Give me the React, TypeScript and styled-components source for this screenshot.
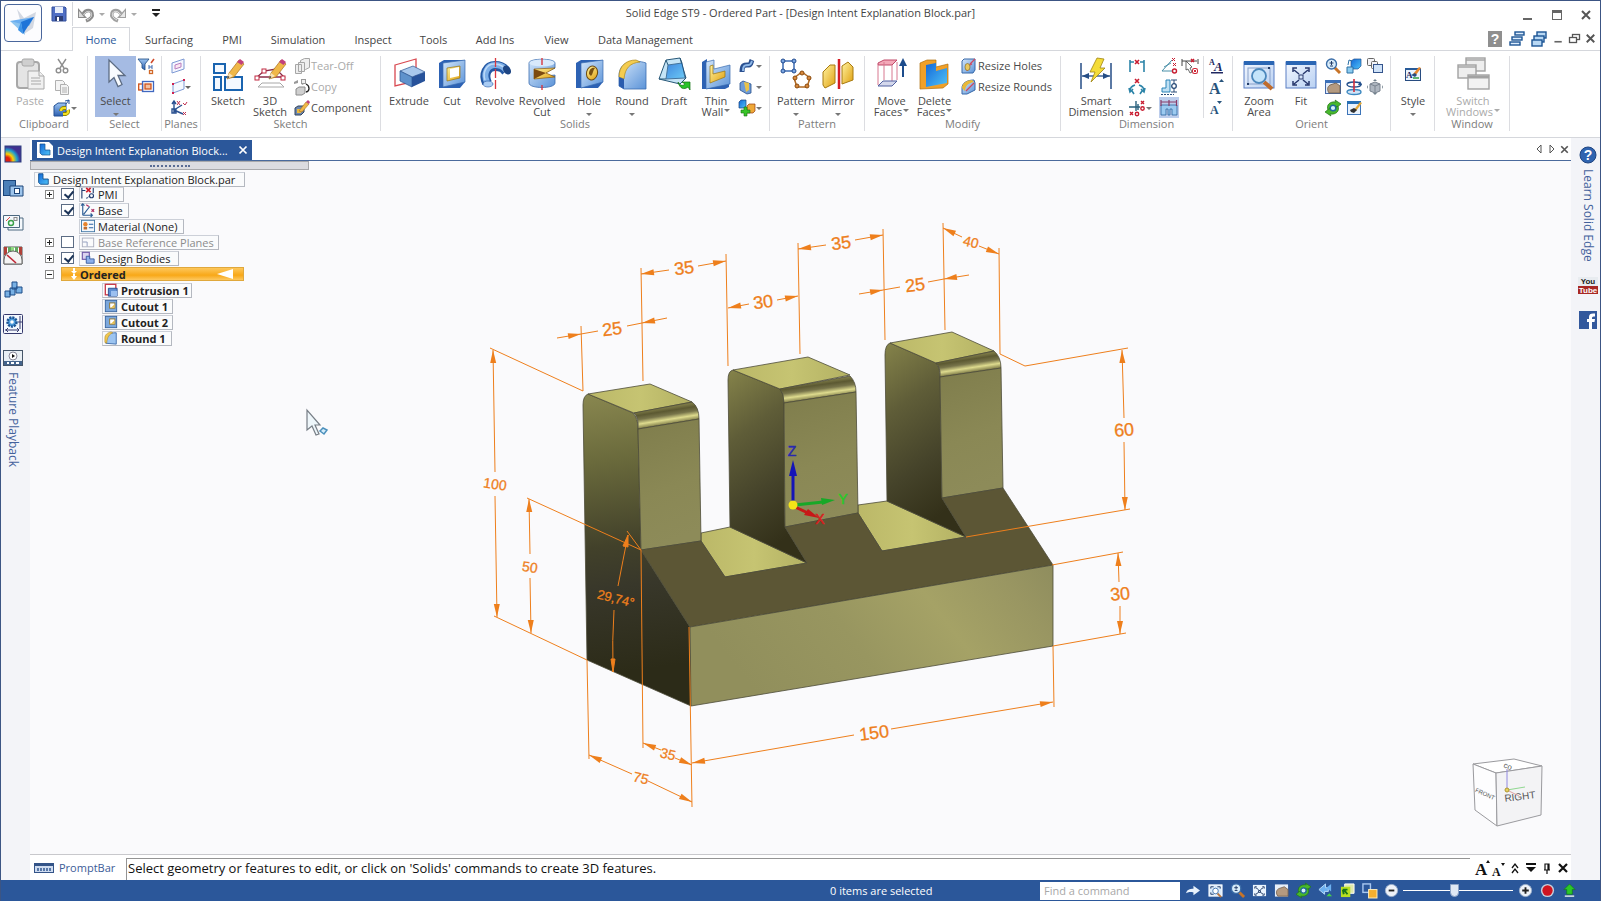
import React from "react";
import styled, { createGlobalStyle, css } from "styled-components";

const UI_FONT = '"Open Sans", "Noto Sans", sans-serif';
const BLUE = "#2b579a";
const LINE = "#d5d7dc";
const ORANGE = "#ee7f1c";

const GlobalStyle = createGlobalStyle`
  * { box-sizing: border-box; }
  body { margin: 0; font-family: ${UI_FONT}; font-size: 11px; color: #444; background: #fff; }
  button, input { font-family: inherit; font-size: inherit; color: inherit; }
  button { border: 0; padding: 0; background: none; cursor: default; }
  svg { display: block; flex: none; }
`;

/* ---------- icon drawings ---------- */

const DefsSvg = styled.svg`position: absolute; width: 0; height: 0;`;

const Defs = () => (
  <DefsSvg aria-hidden="true">
    <defs>
      <linearGradient id="blu" x1="0" y1="0" x2="1" y2="1"><stop offset="0" stopColor="#d3e6fa" /><stop offset="1" stopColor="#5b93d8" /></linearGradient>
      <linearGradient id="blu2" x1="0" y1="0" x2="0" y2="1"><stop offset="0" stopColor="#9cc4f2" /><stop offset="1" stopColor="#2c5fb0" /></linearGradient>
      <linearGradient id="yel" x1="0" y1="0" x2="1" y2="1"><stop offset="0" stopColor="#fff3a0" /><stop offset="1" stopColor="#e0a010" /></linearGradient>
      <linearGradient id="pane" x1="0" y1="0" x2="1" y2="1"><stop offset="0" stopColor="#f4f8ff" /><stop offset="1" stopColor="#b8d0f2" /></linearGradient>
      <linearGradient id="sky" x1="0" y1="0" x2="1" y2="1"><stop offset="0" stopColor="#1468d8" /><stop offset="1" stopColor="#4fc3f7" /></linearGradient>
      <radialGradient id="heat" cx="0.1" cy="0.9" r="1"><stop offset="0.2" stopColor="#e02010" /><stop offset="0.4" stopColor="#ffd000" /><stop offset="0.65" stopColor="#20a0d0" /><stop offset="0.85" stopColor="#403090" /></radialGradient>
    </defs>
  </DefsSvg>
);

const pencil = (
  <g><path d="M15 21l2-6 10-13 5 4-10 13z" fill="#f0b848" stroke="#a87020" strokeWidth=".7" /><path d="M15 21l2-6 4 3z" fill="#f7e2b8" /><path d="M15 21l1-3 1.500 1z" fill="#333" /><path d="M25 4l3-3 4 3-2.500 3z" fill="#c2417c" /></g>
);
const monitor = <g><rect x="1" y="4" width="30" height="26" fill="url(#pane)" stroke="#5a7fc4" /><rect x="1" y="3" width="30" height="4" fill="#2a66b4" /></g>;
const gripHand = <path d="M4 14c-2-3-2-6 1-8l6-2 4 3v7z" fill="#b49a80" stroke="#6d5a48" strokeWidth=".8" />;
const magnifier = <g><path d="M9 9l6 6" stroke="#c87428" strokeWidth="3" /><circle cx="6.500" cy="6" r="5" fill="#d8ecfa" stroke="#3c6ea8" strokeWidth="1.400" /></g>;

const art: Record<string, React.ReactNode> = {
  logo: <g><path d="M8 0l7 9 12-6-3 16-9 6z" fill="#d3d8e2" /><path d="M1 12h13l2 14z" fill="#8cc4f0" /><path d="M1 12l24-4-5 9z" fill="#6aaef0" /><path d="M12 13l13-5-11 17z" fill="#1f74d8" /><path d="M12 13l-3 8 5 4z" fill="#3a92e8" /></g>,
  save: <g><path d="M1 1h13l1 1v13H1z" fill="#4f6ec4" stroke="#34509c" /><rect x="4" y="1" width="8" height="6" fill="#e8eefa" /><rect x="4" y="10" width="8" height="5" fill="#2d3f78" /><rect x="6" y="11" width="2" height="4" fill="#fff" /></g>,
  undo: <g><path d="M8 15c5-2 7-5 6-8s-6-4-9 1" fill="none" stroke="#8c8c8c" strokeWidth="3.400" /><path d="M0 2v10h9z" fill="#8c8c8c" /><path d="M9 14c4-2 5-4 4.500-6.500s-5-3.500-8 1" fill="none" stroke="#dcdcdc" /><path d="M1 5v6h5z" fill="#dcdcdc" /></g>,
  redo: <g transform="translate(16 0) scale(-1 1)"><path d="M8 15c5-2 7-5 6-8s-6-4-9 1" fill="none" stroke="#a0a0a0" strokeWidth="3.400" /><path d="M0 2v10h9z" fill="#a0a0a0" /><path d="M9 14c4-2 5-4 4.500-6.500s-5-3.500-8 1" fill="none" stroke="#e8e8e8" /><path d="M1 5v6h5z" fill="#e8e8e8" /></g>,
  customise: <g fill="#222"><rect x="4" y="3" width="8" height="2" /><path d="M4 7h8l-4 4z" /></g>,
  paste: <g stroke="#a8a8a8" fill="#f0f0f0"><rect x="3" y="4" width="22" height="26" rx="3" fill="#e4e4e4" strokeWidth="2" /><rect x="8" y="1" width="12" height="7" rx="2" fill="#cfcfcf" /><path d="M14 13h11l5 5v13H14z" /><path d="M17 20h9M17 23h10M17 26h10M25 13v5h5" /></g>,
  scissors: <g stroke="#8e8e8e" strokeWidth="1.400" fill="none"><path d="M4 1l6 9M12 1l-6 9" /><circle cx="4.500" cy="12.500" r="2.300" /><circle cx="11.500" cy="12.500" r="2.300" /></g>,
  pages: <g stroke="#b0b0b0" fill="#f4f4f4"><path d="M1.500 1.500h7l2 2v8h-9z" /><path d="M6.500 5.500h6l2 2v8h-8z" /><path d="M8 9h5M8 11h5M8 13h5" /></g>,
  partClip: <g><path d="M0 6l4-3h8v10l-3 3H0z" fill="url(#blu2)" stroke="#245094" /><path d="M12 4l3-4M11 1l4-1 0 4" stroke="#2a57a0" fill="none" /><path d="M7 11a3 3 0 013-3h2M9 14h3a3 3 0 002-4" stroke="#8f8200" strokeWidth="3.800" fill="none" /><path d="M7 11a3 3 0 013-3h2M9 14h3a3 3 0 002-4" stroke="#f4e020" strokeWidth="2.200" fill="none" /></g>,
  cursor: <path d="M9 2v22l5-4.500 4 9 4-2-4-9h7z" fill="#f8fbff" stroke="#5c6c84" strokeWidth="1.300" />,
  filter: <g><path d="M0 1h11L7 6v6l-3-2V6z" fill="url(#blu2)" stroke="#1c4a80" strokeWidth=".8" /><path d="M13 5l3-4" stroke="#d04828" strokeWidth="1.500" /><path d="M11 7v4M14 7v4M11 9h3" stroke="#3c68b0" /><rect x="11.500" y="12.500" width="3" height="3" fill="none" stroke="#d06828" strokeWidth="1.300" /></g>,
  selectBox: <g fill="none" strokeWidth="1.300"><rect x=".7" y="5" width="4" height="6" stroke="#d05018" /><rect x="4.500" y="2.500" width="11" height="10" stroke="#4068c0" /><rect x="7" y="5" width="6" height="5" fill="#f4c0a0" stroke="#d05018" /></g>,
  planeA: <g><path d="M1 5l12-4v10L1 15z" fill="#f5f6ff" stroke="#7e9ad4" /><path d="M4 7l6-2v4l-6 2z" fill="#fbe6f0" stroke="#b87fc0" /></g>,
  planeB: <g><path d="M2 5l11-4v9L2 14z" fill="#f5f9ff" stroke="#7e9ad4" /><g fill="#d02050"><rect x="12" y="0" width="2" height="2" /><rect x="1" y="13" width="2" height="2" /><rect x="1" y="4" width="2" height="2" /></g><path d="M14 7h6l-3 3z" fill="#666" /></g>,
  axes: <g stroke="#2a5090" strokeWidth="1.400" fill="none"><path d="M3 13V2M1 4l2-3 2 3M3 10l9 4M3 10l8-5M1 9h4v4H1z" /><path d="M6 1l3 4M9 1L6 5" stroke="#c03050" strokeWidth="1" /><path d="M12 12l3 3M15 12l-3 3M12 3l2 2 2-3" stroke="#c03050" strokeWidth="1" /></g>,
  sketch: <g fill="#f4f9ff" stroke="#1a64b0" strokeWidth="2"><rect x="2" y="6" width="11" height="9" /><rect x="2" y="19" width="7" height="13" /><rect x="13" y="19" width="17" height="13" /><g stroke="none">{pencil}</g></g>,
  sketch3: <g><path d="M2 20l8-7 12-2 8 8H2z" fill="none" stroke="#8a2c48" strokeWidth="1.300" /><g fill="#fff" stroke="#c02840"><rect x="1" y="18" width="4" height="4" /><rect x="8" y="11" width="4" height="4" /><rect x="27" y="18" width="4" height="4" /></g><path d="M8 25h18l4 4H4z" fill="#fff" stroke="#a8a8a8" />{pencil}</g>,
  tear: <g fill="#eee" stroke="#a6a6a6"><path d="M6.500 2.500l4-2h5v9l-4 2h-5z" /><path d="M4.500 4.500h6v9h-6zM1.500 6.500h6v9h-6z" /></g>,
  copyIc: <g><path d="M0 3l4-2v3l-4 1zM7 3l4-2 1 3-4 2z" fill="#999" /><rect x="7.500" y=".5" width="4" height="4" fill="#eee" stroke="#999" /><path d="M2 10l3-2h6v6l-3 2H2z" fill="#cfcfcf" stroke="#8a8a8a" /><path d="M12 5c4 2 4 7 0 8" fill="none" stroke="#222" strokeWidth="1.300" /></g>,
  component: <g><path d="M1 8l3-2h6v6l-3 3H1z" fill="#6c86ac" stroke="#33445e" /><rect x="3" y="9" width="4" height="4" fill="#e8b840" /><path d="M5 11L12 2l3 2-7 8z" fill="#f0b848" stroke="#a87020" strokeWidth=".6" /><path d="M12 2l2-2 2 2-1 2z" fill="#c2417c" /></g>,
  extrude: <g><path d="M2 7l21-6v22L2 28z" fill="#fff" stroke="#d84850" strokeWidth="1.300" /><path d="M7 13l13-5 12 6-13 5z" fill="#a9c8ec" stroke="#2c5490" strokeWidth=".7" /><path d="M7 13l12 6v10L7 23z" fill="#5f92cc" stroke="#2c5490" strokeWidth=".7" /><path d="M19 19l13-5v9l-13 6z" fill="#27529a" /></g>,
  cut: <g><path d="M3 5l5-3h21v22l-5 6H3z" fill="#2d62b4" /><path d="M7 5l22-3v22L7 29z" fill="url(#blu)" stroke="#3a6cb0" strokeWidth=".7" /><path d="M11 10l13-2v12l-13 3z" fill="url(#yel)" stroke="#9a7410" strokeWidth=".7" /><path d="M14 11l9-2v9l-9 2z" fill="#fff" /></g>,
  revolve: <g><path d="M8 25C4 16 8 8 16 8s9 3 11 5" fill="none" stroke="#2458a4" strokeWidth="10" /><path d="M8 24C4 16 8 7 16 7s9 3 11 5" fill="none" stroke="#7fb0e8" strokeWidth="6" /><path d="M6 22C3 14 8 6 15 6s8 2 11 4" fill="none" stroke="#bcd9f8" strokeWidth="1.500" /><ellipse cx="28" cy="12" rx="3.500" ry="5" fill="#1e4684" transform="rotate(-35 28 12)" /><ellipse cx="9" cy="26" rx="5" ry="3" fill="#a9ccf4" stroke="#2458a4" strokeWidth=".6" /><path d="M16.500 0v32" stroke="#d83840" strokeWidth="1.300" strokeDasharray="9 2" /></g>,
  revolvedCut: <g><path d="M3 5c0-5 26-5 26 0v5l-9 4v4l9-1v8c0 6-26 6-26 0z" fill="url(#blu)" stroke="#3a6cb0" strokeWidth=".8" /><path d="M8 11l21-1-9 5 9 4-21 2z" fill="url(#yel)" stroke="#8a5a10" strokeWidth=".7" /><path d="M8 11l12 4-12 6z" fill="#7c4a10" /><ellipse cx="16" cy="5" rx="12.500" ry="3.500" fill="#d8e9fb" /><path d="M16 0v7M16 27v5" stroke="#d83840" strokeWidth="1.400" /></g>,
  hole: <g><path d="M3 5l5-3h22v22l-5 6H3z" fill="#2d62b4" /><path d="M8 5l22-3v22L8 30z" fill="url(#blu)" stroke="#3a6cb0" strokeWidth=".7" /><ellipse cx="19" cy="15" rx="5.500" ry="7" fill="url(#yel)" stroke="#6b4a10" transform="rotate(15 19 15)" /><path d="M16 16c0-5 3-7 6-6-2 2-2 6-4 8z" fill="#7b5210" /></g>,
  round: <g><path d="M3 18v10l5 3h22V5c-12-4-27-2-27 13z" fill="url(#blu)" stroke="#3a6cb0" strokeWidth=".8" /><path d="M3 19C3 8 10 2 20 2l4 2C14 5 9 10 8 21z" fill="#f4cc50" stroke="#b08818" strokeWidth=".7" /><path d="M3 19l5 2v10l-5-3z" fill="#2a5cae" /></g>,
  draft: <g><path d="M8 2l14-2 6 20-6 6-21-5z" fill="#c5e4f6" stroke="#285878" /><path d="M10 7l14-2 3 15-19 1z" fill="url(#sky)" opacity=".75" stroke="#1b4f80" /><path d="M8 2l2 5M22 0l2 5M27 20l1 0M8 21l-7 0" stroke="#285878" /><path d="M20 24c2 4 5 4 7 2l-3-2 8 0v8l-2-3c-4 3-8 2-10-5z" fill="#28c428" stroke="#107010" strokeWidth=".7" /></g>,
  thin: <g><path d="M2 4l5-3v25h22v3l-4 2H2z" fill="#2d62b4" /><path d="M6 4l8-2v9l16-4v19L6 31z" fill="url(#blu)" stroke="#3a6cb0" strokeWidth=".7" /><path d="M10 8l3-1v9l12-3v6l-15 6z" fill="url(#yel)" stroke="#9a7410" strokeWidth=".7" /></g>,
  sweep: <g><path d="M3 14c0-8 3-7 7-7 2 0 2-3 3-5" fill="none" stroke="#2a5090" strokeWidth="5" /><path d="M4 13c0-6 2-6 6-6 2 0 2-2 3-4" fill="none" stroke="#8fb8e8" strokeWidth="2" /></g>,
  rib: <g><path d="M1 4l3-2 8 3v9l-4 1-7-4z" fill="#6f9cd8" stroke="#28508c" strokeWidth=".8" /><path d="M5 3l5 1v7l-3 2z" fill="#e9c34c" /></g>,
  addBody: <g><path d="M0 2l2-2h5v6l-2 2H0z" fill="url(#sky)" stroke="#18407c" strokeWidth=".7" /><path d="M8 6l2-2h6v7l-2 2H8z" fill="#eea838" stroke="#9a3c10" strokeWidth=".7" /><path d="M5 7h3v3h3v3H8v3H5v-3H2v-3h3z" fill="#38c428" stroke="#147010" strokeWidth=".6" /></g>,
  pattern: <g fill="none"><rect x="3" y="3" width="11" height="10" stroke="#3c6cb4" strokeWidth="1.500" /><g fill="#78a4e0" stroke="#244c90"><circle cx="3" cy="3" r="2" /><circle cx="14" cy="3" r="2" /><circle cx="3" cy="13" r="2" /><circle cx="14" cy="13" r="2" /></g><path d="M22 14l8 6-3 9H17l-3-9z" stroke="#b06820" strokeWidth="1.500" /><g fill="#d8883c" stroke="#8a4c10"><circle cx="22" cy="15" r="2" /><circle cx="29" cy="20" r="2" /><circle cx="27" cy="28" r="2" /><circle cx="17" cy="28" r="2" /><circle cx="15" cy="20" r="2" /></g></g>,
  mirror: <g><path d="M1 14L8 7h5v18l-10 5-2-3z" fill="url(#yel)" stroke="#a87a10" /><path d="M20 8l6-4 5 5v13l-11 4z" fill="url(#yel)" stroke="#a87a10" /><path d="M17 1v30" stroke="#d41c24" strokeWidth="2.500" /></g>,
  moveFaces: <g fill="none"><path d="M2 5l6-3h13l-5 5H2z" fill="#f4a8b8" stroke="#c04868" /><path d="M2 7v20M16 7v20M21 4v18M8 4v18" stroke="#d87890" /><path d="M2 28l5-5h14l-5 5z" fill="#d4d8ec" stroke="#5060a0" /><path d="M27 19V4" stroke="#1c4c8c" strokeWidth="2" /><path d="M27 0l4 8h-8z" fill="#1c4c8c" /></g>,
  deleteFaces: <g><path d="M1 5l7-3h9v7l12-3v20l-5 4-23 1z" fill="#f0a028" stroke="#b07010" strokeWidth=".7" /><path d="M7 7l10-2v8l11-3v15L7 29z" fill="url(#sky)" /></g>,
  resizeH: <g><path d="M1 3l2-2h11v11l-2 3H1z" fill="url(#blu)" stroke="#3868a8" /><path d="M9 6l5-5M6 13c0-4 2-6 5-7" stroke="#d04860" strokeWidth="1.300" fill="none" /><ellipse cx="6.500" cy="9" rx="2.500" ry="3.500" fill="#e8c860" stroke="#806010" strokeWidth=".6" /></g>,
  resizeR: <g><path d="M1 9c0-5 5-8 12-8l1 3v7l-8 4H1z" fill="url(#blu)" stroke="#3868a8" /><path d="M1 9c0-5 5-8 10-8l2 2C7 4 4 7 4 12z" fill="#e8b838" /><path d="M5 12l8-8" stroke="#d04860" strokeWidth="1.300" /></g>,
  smart: <g><path d="M1 5v26M31 5v26" stroke="#264e86" strokeWidth="1.500" /><path d="M2 18h28" stroke="#264e86" strokeWidth="1.300" /><path d="M2 18l7-3v6zM30 18l-7-3v6z" fill="#264e86" /><path d="M17 0l7 1-4 9h5L11 24l4-10h-5z" fill="#f4dc38" stroke="#a08410" strokeWidth=".8" /></g>,
  d1: <g stroke="#2c84a8" strokeWidth="1.600" fill="none"><path d="M1 2v12M15 2v12M1 4h4M11 4h4" /><path d="M6 2l4 4M10 2L6 6" stroke="#c81c30" /></g>,
  d2: <g stroke="#2c84a8" strokeWidth="1.600" fill="none"><path d="M6 6c-3 1-5 3-5 6M10 6c3 1 5 3 5 6M0 9l1 4 3-3M16 9l-1 4-3-3M5 15l-2-3M11 15l2-3" /><path d="M6 0l4 4M10 0L6 4" stroke="#c81c30" /></g>,
  d3: <g stroke="#28607c" strokeWidth="1.400" fill="none"><path d="M0 7h11M7 1v10M9 4v6" /><path d="M12 1l3 3M15 1l-3 3M1 12l3 3M4 12l-3 3" stroke="#c81c30" /><circle cx="13.500" cy="8.500" r="1.700" stroke="#c81c30" /><circle cx="8" cy="14" r="1.700" stroke="#c81c30" /></g>,
  d4: <g fill="none"><path d="M1 13L11 2M1 13h10M3 9l7-4" stroke="#4a90a8" /><path d="M11 0l3 3M14 0l-3 3M12 5l3 3M15 5l-3 3" stroke="#c81c30" /><circle cx="13.500" cy="13" r="2" stroke="#c81c30" strokeWidth="1.400" /></g>,
  d5: <g fill="none"><path d="M1 13V9h4V1h4v12z" fill="#bfe0f4" stroke="#2c84b8" /><path d="M10 1h6M13 1v12M10 13h6" stroke="#2a4c78" /><circle cx="13" cy="7" r="2.300" fill="#fff" stroke="#2a4c78" strokeWidth="1.300" /><path d="M0 15.500h13" stroke="#2a4c78" strokeDasharray="2 1" /></g>,
  d6: <g><rect x="-2" y="-3" width="20" height="21" fill="#bccdec" /><path d="M0 5h16v10h-5V9H9v6H7V9H5v6H0z" fill="#9ccaf0" stroke="#2c64a0" strokeWidth=".8" /><path d="M0 0v6M8 0v6M15.500 0v6M0 2h15" stroke="#883c68" fill="none" strokeWidth="1.200" /></g>,
  d7: <g fill="none"><path d="M0 1v7M16 1v5M0 3h15" stroke="#444" /><path d="M9 1l3 3M12 1L9 4" stroke="#c81c30" strokeWidth="1.500" /><path d="M4 3l6 6-2 1 2 4-2 1-2-4-2 1z" fill="#fff" stroke="#444" strokeWidth=".8" /><rect x="10.500" y="10.500" width="5" height="5" rx="1" fill="#fff" stroke="#d02838" /><path d="M11.500 11.500l3 3M14.500 11.500l-3 3" stroke="#d02838" /></g>,
  aStyle: <g fill="#202860" fontFamily="Liberation Serif" fontWeight="bold"><text x="0" y="7" fontSize="8">A</text><text x="5" y="13" fontSize="13" fontStyle="italic">A</text><path d="M2 14h12v1.500H2z" /></g>,
  aUp: <g fill="#28547c"><text x="0" y="15" fontSize="16" fontFamily="Liberation Serif" fontWeight="bold">A</text><path d="M10 3l2.500-3L15 3z" /></g>,
  aDown: <g fill="#28547c"><text x="1" y="14" fontSize="12" fontFamily="Liberation Serif" fontWeight="bold">A</text><path d="M8 1h5l-2.500 3z" /></g>,
  zoomArea: <g>{monitor}<rect x="5" y="10" width="22" height="16" fill="none" stroke="#88a0c8" /><path d="M25 9h2v2h-2zM4 25h2v2H4z" fill="#223c68" /><path d="M21 24l8 7" stroke="#c06c2c" strokeWidth="4" /><circle cx="16" cy="18" r="7" fill="#c4e4fa" stroke="#4c88bc" strokeWidth="1.800" /></g>,
  fit: <g>{monitor}<g stroke="#28386c" strokeWidth="1.500" fill="none"><path d="M9 12l5 4M23 12l-5 4M9 26l5-4M23 26l-5-4M8 14v-4h4M20 10h4v4M8 23v4h4M20 27h4v-4" /><rect x="14" y="17" width="4" height="4" strokeWidth="1" /></g></g>,
  zoom: <g>{magnifier}<path d="M4.500 5h4M6.500 3v4M5 8h3" stroke="#223c68" /></g>,
  hand: <g><rect x=".5" y="1.500" width="15" height="13" fill="#dfe9f8" stroke="#4468a8" /><rect x="0" y="1" width="16" height="3" fill="#3c70b8" />{gripHand}</g>,
  spin: <g><path d="M3 10C1 5 5 1 11 2l-1-2 6 4-5 4V6C8 5 5 6 5 9z" fill="#48b82c" stroke="#1f7414" strokeWidth=".7" /><path d="M13 6c2 5-2 9-8 8l1 2-6-4 5-4v2c3 1 6 0 6-3z" fill="#48b82c" stroke="#1f7414" strokeWidth=".7" /><circle cx="8" cy="8" r="2.800" fill="#d6f0fa" stroke="#206a9c" strokeWidth="1.400" /></g>,
  rotate: <g><path d="M5 3l3-2h7v7l-3 3H5z" fill="url(#sky)" stroke="#24508c" strokeWidth=".7" /><path d="M1 9h6v6H1z" fill="#8cccf0" stroke="#2c70a4" /><path d="M2 7l1-5 3 1" fill="none" stroke="#2c70a4" /></g>,
  turn: <g fill="none" strokeWidth="1.400"><ellipse cx="8" cy="5.500" rx="7" ry="2.500" stroke="#24508c" /><ellipse cx="8" cy="13" rx="7" ry="2.500" fill="#cfe4f8" stroke="#3c88c0" /><path d="M8 0v13" stroke="#d02c3c" strokeWidth="1.600" /><path d="M12 6l4 0-2-4z" fill="#24508c" /></g>,
  preview: <g><rect x="1.500" y="1.500" width="13" height="13" fill="#eaf3fd" stroke="#3c74b8" /><rect x="1" y="1" width="14" height="3" fill="#2870b4" /><path d="M7 11l7-9 2 1-6 8z" fill="#e4a838" /><path d="M4 10l4-2 3 2-3 3-3-1z" fill="#303030" /></g>,
  views: <g fill="#f4f4f8" stroke="#666"><rect x=".5" y=".5" width="7" height="7" rx="1" /><rect x="4.500" y="3.500" width="6" height="7" rx="1" /><rect x="6.500" y="6.500" width="9" height="8" fill="#cfe2f8" stroke="#34548c" /></g>,
  cube: <g><path d="M3 5l5-2 5 2v7l-5 2-5-2z" fill="#aeb6c0" stroke="#7a8490" /><path d="M3 5l5 2 5-2M8 7v7" stroke="#7a8490" fill="none" /><path d="M6 2l2-2 2 2zM6 14l2 2 2-2zM1 6l-1 2 1 2zM15 6l1 2-1 2z" fill="#70808c" /></g>,
  style: <g><rect x=".5" y="2.500" width="15" height="12" fill="#eaf3fd" stroke="#284c80" /><rect x="0" y="2" width="16" height="2" fill="#285a98" /><text x="1" y="12" fontSize="9" fontFamily="Liberation Serif" fontWeight="bold" fill="#202860">A</text><path d="M8 8l6-7 2 1-5 7z" fill="#e8882c" /><path d="M6 9l4-2 2 2-2 2z" fill="#284c80" /><path d="M8 12h6" stroke="#30a040" strokeWidth="1.500" /></g>,
  windows: <g fill="#eee" stroke="#a2a2a2" strokeWidth="1.400"><rect x="9" y="0" width="19" height="13" /><path d="M9 2h19" /><rect x="1" y="7" width="18" height="13" /><path d="M1 9h18" /><rect x="11" y="17" width="21" height="14" fill="#f2f2f2" /><path d="M11 19h21" strokeWidth="3" /></g>,
  help: <g><rect x="1" y="0" width="14" height="16" fill="#8f8f8f" /><text x="8" y="13" textAnchor="middle" fontSize="14" fontWeight="bold" fill="#fff" fontFamily="Liberation Sans">?</text></g>,
  cascade: <g fill="#dcecfc" stroke="#1c5494" strokeWidth="1.400"><rect x="6" y="1" width="9" height="3" /><rect x="3" y="6" width="10" height="3" /><rect x="1" y="11" width="10" height="3" /></g>,
  cascade2: <g fill="#b8d8f4" stroke="#1c5494" strokeWidth="1.400"><rect x="6" y="1" width="9" height="6" /><rect x="3" y="5" width="10" height="6" /><rect x="1" y="9" width="10" height="6" /></g>,
  min: <path d="M3 11h9v2H3z" fill="#666" />,
  max: <g><rect x="3.500" y="3.500" width="9" height="9" fill="none" stroke="#666" /><path d="M3 3h10v3H3z" fill="#666" /></g>,
  restore: <g fill="none" stroke="#555" strokeWidth="1.300"><rect x="6.500" y="3.500" width="7" height="5" /><rect x="3.500" y="6.500" width="7" height="5" fill="#fff" /></g>,
  close: <path d="M4 4l8 8M12 4l-8 8" stroke="currentColor" strokeWidth="2" />,
  prev: <path d="M10 4v8L6 8z" fill="none" stroke="#555" />,
  next: <path d="M6 4v8l4-4z" fill="none" stroke="#555" />,
  docTab: <g><path d="M0 0h12l4 4v12H0z" fill="#fff" /><path d="M3 2h5v6h5v5H5l-2-2z" fill="url(#sky)" stroke="#14508c" strokeWidth=".7" /></g>,
  part: <path d="M3 2h5v6h6v6H5l-2-2z" fill="url(#sky)" stroke="#14508c" />,
  heat: <rect x="2" y="2" width="16" height="16" fill="url(#heat)" stroke="#304080" />,
  family: <g><rect x=".5" y="2.500" width="12" height="15" fill="#4c80b8" stroke="#1c4478" /><path d="M7 8h13v10H7z" fill="#9cc4ec" stroke="#1c4478" /><rect x="11.500" y="10.500" width="5" height="5" fill="#fff" stroke="#1c4478" /></g>,
  library: <g fill="#f4f8fc" stroke="#4c6880"><path d="M5 6h15v12H5z" /><path d="M.5 3.500h16v12H.5z" /><circle cx="8" cy="11" r="2.500" stroke="#38a048" strokeWidth="1.400" fill="none" /><path d="M3 9l4-4" stroke="#e04848" /><rect x="11" y="5.500" width="3" height="3" stroke="#888" /></g>,
  gauge: <g><path d="M1 1h18v17H1z" fill="#fff" stroke="#555" /><path d="M1 1h3v8H1z" fill="#b04038" /><path d="M5 1h3v6H5zM12 1h3v6h-3z" fill="#60a860" /><path d="M8 1h3v5H8z" fill="#90d880" /><path d="M16 1h3v8h-3z" fill="#b04038" /><path d="M1 14a9 9 0 0118 0v4H1z" fill="#f4f4f4" stroke="#666" /><path d="M4 9l9 8" stroke="#c02838" strokeWidth="1.600" /></g>,
  blocks: <g fill="#78b0e4" stroke="#1c4c88"><path d="M2 11h5v6H2zM7 8h5v7H7zM9 2h5v7H9zM13 7h6v6h-6z" /></g>,
  gear: <g><rect x=".5" y=".5" width="19" height="19" rx="1" fill="#f4f8fe" stroke="#34386c" /><circle cx="9" cy="8" r="4.500" fill="#4c9cdc" stroke="#1c5494" strokeWidth="2.500" strokeDasharray="2 1" /><circle cx="9" cy="8" r="1.800" fill="#fff" /><path d="M17 2v13M2 16h14M15 8h4M5 14l-2 2 2 2M14 14l2 2-2 2" stroke="#34386c" fill="none" /></g>,
  film: <g><rect x=".5" y="2.500" width="19" height="15" fill="#e8eef4" stroke="#445468" /><rect x="1" y="13" width="18" height="4" fill="#44648c" /><path d="M4 14h2v2H4zM8 14h3v2H8zM13 14h3v2h-3z" fill="#fff" /><circle cx="10" cy="8" r="4" fill="#fff" stroke="#889" /><path d="M9 6l3 2-3 2z" fill="#111" /></g>,
  question: <g><circle cx="10" cy="10" r="8" fill="#2f64b0" stroke="#1f4480" /><text x="10" y="15" textAnchor="middle" fontSize="14" fontWeight="bold" fill="#fff" fontFamily="Liberation Sans">?</text></g>,
  youtube: <g fontFamily="Liberation Sans" fontWeight="bold" textAnchor="middle" fontSize="8"><rect x="0" y="1" width="20" height="9" fill="#e8ecf0" /><rect x="0" y="10" width="20" height="8" fill="#a82824" /><text x="10" y="8" fill="#222">You</text><text x="10" y="17" fill="#fff">Tube</text></g>,
  facebook: <g><rect x="1" y="1" width="18" height="18" fill="#32589c" /><path d="M11 19v-7H9V9h2V7c0-3 2-4 6-3.500v3c-2 0-3 0-3 1.500v1h3l-.5 3H14v7z" fill="#fff" /></g>,
  pmi: <g fill="none" stroke="#223c70" strokeWidth="1.300"><path d="M1 1v12M1 4h4M14 1v6" /><path d="M6 1l5 5M11 1L6 6" stroke="#d01c2c" strokeWidth="2" /><circle cx="12" cy="10" r="2.300" /><path d="M6 13l5-3" strokeDasharray="2 1" /></g>,
  base: <g fill="none" stroke="#2c5c94" strokeWidth="1.300"><path d="M2 14V1M0 3l2-2 2 2M2 14h11M11 12l2 2-2 2M3 13l7-9" /><path d="M6 2l3 2M12 7l3 3M15 7l-3 3" stroke="#b02c60" /></g>,
  material: <g><rect x=".5" y="1.500" width="15" height="13" fill="#f4f8fc" stroke="#3c74a4" /><circle cx="5" cy="6" r="2.500" fill="#e8842c" /><rect x="3" y="9" width="4" height="3" fill="#c06c2c" /><path d="M9 6h5M9 10h5" stroke="#2c64a4" strokeWidth="1.300" /></g>,
  refPlane: <g fill="none" stroke="#a8acbc"><rect x="1.500" y="3.500" width="13" height="10" /><path d="M2 8h5v5" stroke="#8894b8" /></g>,
  bodies: <g><rect x="1.500" y="1.500" width="8" height="8" fill="#dcd4f0" stroke="#7058a8" strokeWidth="1.300" /><path d="M6 6h4v3h5v5H6z" fill="#8cb0ec" stroke="#34589c" /></g>,
  protrusion: <g><rect x="1.500" y="1.500" width="12" height="12" fill="#fff" stroke="#c83848" strokeWidth="1.500" /><path d="M5 6h10v9H5z" fill="#5c8cd0" stroke="#24488c" /><path d="M8 9h7v6H8z" fill="#9cc0f0" /></g>,
  cutout: <g><rect x="1.500" y="1.500" width="13" height="13" fill="#7ca8dc" stroke="#34609c" /><rect x="6.500" y="4.500" width="6" height="6" fill="#fff" stroke="#907020" /><path d="M7 10h5V6L9 9z" fill="#e8bc40" /></g>,
  roundSm: <g><path d="M2 14V8c0-4 4-6 12-6v13z" fill="#9cc4f0" stroke="#3868a8" /><path d="M1 13V8c0-4 3-6 7-7l2 1C6 4 4 6 3 14z" fill="#f0c850" stroke="#a88020" strokeWidth=".6" /></g>,
  promptIc: <g><rect x=".5" y="5.500" width="19" height="9" fill="#cfdcf0" stroke="#345488" /><rect x="0" y="5" width="20" height="3" fill="#345488" /><path d="M3 11.500h14" stroke="#5878a8" strokeWidth="3" strokeDasharray="2 1" /></g>,
  fontUp: <g fill="#111"><text x="0" y="15" fontSize="17" fontFamily="Liberation Serif" fontWeight="bold">A</text><path d="M11 3l2-3 2 3z" /></g>,
  fontDown: <g fill="#111"><text x="1" y="16" fontSize="12" fontFamily="Liberation Serif" fontWeight="bold">A</text><path d="M10 3h4l-2 3z" /></g>,
  collapse: <path d="M5 8l3-4 3 4M5 13l3-4 3 4" fill="none" stroke="#111" strokeWidth="1.300" />,
  menu: <g fill="#111"><rect x="3" y="3" width="10" height="2" /><path d="M3 7h10l-5 5z" /></g>,
  pin: <path d="M6 4h4v6H6zM5 10h6M8 10v4M9 4v6" fill="none" stroke="#111" strokeWidth="1.200" />,
  closeDark: <path d="M4 4l8 8M12 4l-8 8" stroke="#111" strokeWidth="2.200" />,
  go: <path d="M1 11c1-4 4-5 8-5V3l7 5-7 5v-3c-4-1-6 0-8 1z" fill="#e8f2fc" />,
  sArea: <g><rect x="1" y="2" width="14" height="12" fill="#dcecfc" stroke="#fff" /><path d="M3 6V4h3M13 6V4h-3M3 10v2h3" stroke="#223c68" fill="none" /><path d="M10 11l4 4" stroke="#b8743c" strokeWidth="2" /><circle cx="8" cy="8.500" r="3" fill="#fff" stroke="#4878b0" /></g>,
  sFit: <g><rect x="1" y="2" width="14" height="12" fill="#eaf4fe" /><path d="M4 5l3 2M12 5L9 7M4 12l3-2M12 12l-3-2M3 6V4h2M11 4h2v2M3 11v2h2M11 13h2v-2M7 8h2v2H7z" stroke="#223c68" fill="none" /></g>,
  sHand: <g><rect x="1" y="1.500" width="14" height="13" fill="#e6effa" />{gripHand}</g>,
  sLook: <g><path d="M8 1L1 7l6 5V9h4V5H8z" fill="#6cb0f0" stroke="#b8dcfa" /><path d="M14 1L9 5l5 4z" fill="#6cb0f0" /><path d="M9 14l3-3 3 3z" fill="#48d048" /></g>,
  sVisual: <g><path d="M5 1h10v10H5z" fill="#dfe8ac" stroke="#fff" /><rect x="1" y="4" width="10" height="11" fill="#b8e020" /><path d="M3 7l1 5M3 7h5M4 7l4 5" stroke="#187418" strokeWidth="2" /></g>,
  sStyle: <g><rect x="1" y="1" width="8" height="9" fill="none" stroke="#a8c8f0" strokeWidth="1.500" /><rect x="7" y="7" width="9" height="9" fill="#f4b030" stroke="#fff0c0" /></g>,
  minus: <g><circle cx="8" cy="8" r="6.500" fill="#eef2f8" stroke="#9cb0cc" /><path d="M5 8h6" stroke="#222" strokeWidth="2" /></g>,
  plus: <g><circle cx="8" cy="8" r="6.500" fill="#eef2f8" stroke="#9cb0cc" /><path d="M4.500 8h7M8 4.500v7" stroke="#222" strokeWidth="2" /></g>,
  record: <g><circle cx="8" cy="8" r="7" fill="#c8d0dc" /><circle cx="8" cy="8" r="5.500" fill="#d01420" /></g>,
  upload: <g><path d="M8 1l6 6h-3v5H5V7H2z" fill="#2cc828" stroke="#107818" strokeWidth=".7" /><path d="M3 14h10" stroke="#e8f0e8" strokeWidth="1.500" /></g>,
};

const Glyph = ({ name, size = 16, box = 16 }: { name: string; size?: number; box?: number }) => (
  <svg width={size} height={size} viewBox={`0 0 ${box} ${box}`} aria-hidden="true" overflow="visible">{art[name]}</svg>
);

/* ---------- frame ---------- */

const Frame = styled.div`
  height: 100vh;
  display: flex;
  flex-direction: column;
  border: 1px solid #3c5584;
  border-bottom: 0;
  overflow: hidden;
`;

const Header = styled.header`
  display: grid;
  grid-template-columns: 1fr auto 1fr;
  grid-template-rows: 26px 24px;
  flex: none;
`;

const AppButton = styled.button`
  grid-area: 1 / 1 / 3 / 2;
  z-index: 1;
  width: 38px;
  height: 38px;
  margin: 3px;
  display: grid;
  place-items: center;
  border: 1px solid #4a679c;
  border-radius: 4px;
  background: #fcfcfe;
`;

const QuickAccess = styled.div`
  grid-area: 1 / 1;
  display: flex;
  align-items: center;
  gap: 5px;
  padding-left: 50px;
`;

const IconButton = styled.button<{ $w?: number; $h?: number }>`
  width: ${p => p.$w ?? 16}px;
  height: ${p => p.$h ?? 16}px;
  display: flex;
  align-items: center;
  justify-content: center;
  flex: none;
  color: #555;
`;

const Rule = styled.span`
  width: 1px;
  height: 24px;
  background: ${LINE};
`;

const Caret = styled.span<{ $faint?: boolean }>`
  display: inline-block;
  width: 0;
  height: 0;
  flex: none;
  border: 3px solid transparent;
  border-top-color: ${p => (p.$faint ? "#aaa" : "#777")};
  border-bottom: 0;
`;

const Title = styled.h1`
  grid-area: 1 / 2;
  margin: 0;
  font-size: 11px;
  font-weight: 400;
  line-height: 24px;
`;

const WindowButtons = styled.div`
  grid-area: 1 / 3;
  justify-self: end;
  display: flex;
  align-items: center;
  gap: 13px;
  padding: 2px 6px 0 0;
  color: #666;
`;

const TabRow = styled.nav`
  grid-area: 2 / 1 / 3 / 4;
  display: flex;
  padding-left: 71px;
  border-bottom: 1px solid ${LINE};
`;

const Tab = styled.button<{ $w: number; $on?: boolean }>`
  width: ${p => p.$w}px;
  height: 24px;
  white-space: nowrap;
  ${p => p.$on && css`
    color: ${BLUE};
    background: #fff;
    border: 1px solid ${LINE};
    border-bottom: 0;
  `}
`;

const DocButtons = styled.div`
  margin-left: auto;
  display: flex;
  align-items: center;
  gap: 4px;
  padding-right: 4px;
`;

/* ---------- ribbon ---------- */

const Ribbon = styled.div`
  display: flex;
  flex: none;
  height: 87px;
  padding: 5px 0 6px;
  border-bottom: 1px solid ${LINE};
`;

const GroupBox = styled.section<{ $w: number }>`
  width: ${p => p.$w}px;
  flex: none;
  border-right: 1px solid #dcdde1;
  display: flex;
  flex-direction: column;
`;

const GroupBody = styled.div<{ $pad: number }>`
  display: flex;
  height: 61px;
  padding-left: ${p => p.$pad}px;
`;

const GroupName = styled.h2`
  margin: 0;
  font-size: 11px;
  font-weight: 400;
  line-height: 14px;
  text-align: center;
  color: #7c7c7c;
`;

const BigBox = styled.button<{ $w: number; $on?: boolean; $off?: boolean }>`
  width: ${p => p.$w}px;
  height: 61px;
  flex: none;
  display: flex;
  flex-direction: column;
  align-items: center;
  padding-top: 2px;
  color: ${p => (p.$off ? "#aaa" : "#4a4a4a")};
  background: ${p => (p.$on ? "#a5bbe3" : "none")};
`;

const BigLabel = styled.span`
  margin-top: 5px;
  line-height: 11px;
  white-space: pre;
  & > ${Caret} { margin-left: 1px; vertical-align: 4px; }
`;

const UnderCaret = styled.span`
  margin-top: 7px;
  display: flex;
`;

const SmallCol = styled.div<{ $ml?: number }>`
  margin-left: ${p => p.$ml ?? 0}px;
  display: flex;
  flex-direction: column;
  gap: 5px;
  padding-top: 2px;
`;

const SmallBox = styled.button<{ $off?: boolean }>`
  display: flex;
  align-items: center;
  gap: 1px;
  height: 16px;
  line-height: 16px;
  white-space: nowrap;
  color: ${p => (p.$off ? "#aaa" : "#4a4a4a")};
`;

const InnerRule = styled.span`
  width: 1px;
  height: 62px;
  margin: 0 5px;
  background: #dcdde1;
`;

type BigProps = { icon: string; label: string; w?: number; on?: boolean; off?: boolean; drop?: boolean };
const Big = ({ icon, label, w = 42, on, off, drop }: BigProps) => {
  const two = label.includes("\n");
  return (
    <BigBox $w={w} $on={on} $off={off}>
      <Glyph name={icon} size={32} box={32} />
      <BigLabel>{label}{two && drop && <Caret $faint={off} />}</BigLabel>
      {!two && drop && <UnderCaret><Caret /></UnderCaret>}
    </BigBox>
  );
};

const Small = ({ icon, label, off, drop }: { icon: string; label?: string; off?: boolean; drop?: boolean }) => (
  <SmallBox $off={off} aria-label={label ?? icon}>
    <Glyph name={icon} />{label}{drop && <Caret />}
  </SmallBox>
);

const Group = ({ name, w, pad, children }: { name: string; w: number; pad: number; children: React.ReactNode }) => (
  <GroupBox $w={w}>
    <GroupBody $pad={pad}>{children}</GroupBody>
    <GroupName>{name}</GroupName>
  </GroupBox>
);

/* ---------- work area ---------- */

const Work = styled.div`
  flex: 1;
  min-height: 0;
  display: flex;
`;

const Dock = styled.aside<{ $left?: boolean }>`
  width: 29px;
  flex: none;
  display: flex;
  flex-direction: column;
  align-items: center;
  gap: 14px;
  padding: ${p => (p.$left ? "6px 5px 0 0" : "7px 0 0 4px")};
  background: #f3f4f8;
`;

const DockItem = styled.button`
  display: flex;
  flex-direction: column;
  align-items: center;
  gap: 4px;
`;

const VerticalText = styled.span`
  writing-mode: vertical-rl;
  font-size: 12px;
  line-height: 16px;
  color: #43629c;
`;

const Centre = styled.main`
  flex: 1;
  min-width: 0;
  display: flex;
  flex-direction: column;
`;

const DocBar = styled.div`
  height: 23px;
  flex: none;
  display: flex;
  align-items: flex-end;
  padding-left: 2px;
  border-bottom: 1px solid #4a6a9c;
`;

const DocTab = styled.button`
  height: 20px;
  display: flex;
  align-items: center;
  gap: 4px;
  padding: 0 2px 0 5px;
  width: 220px;
  color: #fff;
  background: ${BLUE};
  white-space: nowrap;
  & > svg:last-child { margin-left: auto; }
`;

const DocNav = styled.div`
  margin-left: auto;
  height: 22px;
  display: flex;
  align-items: center;
`;

const Stage = styled.div`
  flex: 1;
  min-height: 0;
  display: grid;
  grid-template: 100% / 100%;
  background: #fafafc;
  & > * { grid-area: 1 / 1; }
`;

const Scene = styled.svg`
  width: 100%;
  height: 100%;
`;

const Panel = styled.div`
  z-index: 1;
  width: 279px;
  align-self: start;
`;

const Grip = styled.div`
  height: 9px;
  display: grid;
  place-items: center;
  border: 1px solid #a9a9ac;
  background: #dcdce0;
  &::after { content: ""; width: 40px; border-top: 2px dotted #5a6c94; }
`;

const Tree = styled.ul`
  list-style: none;
  margin: 0;
  padding: 2px 0 0 4px;
`;

const Row = styled.li<{ $deep?: boolean }>`
  height: 16px;
  display: flex;
  align-items: center;
  padding-left: ${p => (p.$deep ? 68 : 11)}px;
  &:first-child { padding-left: 0; height: 14px; }
`;

const Slot = styled.span<{ $w: number }>`
  width: ${p => p.$w}px;
  height: 16px;
  flex: none;
  display: flex;
  align-items: center;
`;

const Expander = styled.button`
  width: 9px;
  height: 9px;
  display: grid;
  place-items: center;
  border: 1px solid #8a8a8a;
  background: #fff;
`;

const Check = styled.input`
  appearance: none;
  width: 13px;
  height: 12px;
  margin: 0;
  border: 1px solid #5c6c84;
  background: #fff;
  &:checked::after {
    content: "";
    display: block;
    width: 4px;
    height: 7px;
    margin: 0 0 0 4px;
    border: solid #1c3458;
    border-width: 0 2px 2px 0;
    transform: rotate(40deg);
  }
`;

const Chip = styled.label<{ $w: number; $dim?: boolean; $bold?: boolean }>`
  width: ${p => p.$w}px;
  height: 15px;
  display: flex;
  align-items: center;
  gap: 3px;
  padding-left: 1px;
  border: 1px solid;
  border-color: #ccd0d8 #b4b8c0 #b4b8c0 #ccd0d8;
  background: #fafbfc;
  color: ${p => (p.$dim ? "#8c8c8c" : "#222")};
  font-weight: ${p => (p.$bold ? 700 : 400)};
  line-height: 13px;
  white-space: nowrap;
`;

const OrderedBar = styled.div`
  width: 183px;
  height: 14px;
  display: flex;
  align-items: center;
  justify-content: space-between;
  padding: 0 10px 0 8px;
  border: 1px solid #e0a83c;
  background: linear-gradient(#fdc75c, #f8a818 60%, #fdc860);
  color: #222;
  font-weight: 700;
`;

const OrderedName = styled.span`
  display: flex;
  align-items: center;
  gap: 3px;
`;

/* ---------- prompt and status ---------- */

const PromptBar = styled.div`
  height: 26px;
  flex: none;
  display: flex;
  align-items: center;
  padding: 0 0 0 4px;
  border-top: 1px solid #c8c8cc;
  background: #fff;
`;

const PromptName = styled.span`
  width: 92px;
  display: flex;
  align-items: center;
  gap: 5px;
  color: #3c5c98;
`;

const Prompt = styled.p`
  flex: 1;
  align-self: flex-end;
  height: 22px;
  margin: 0 5px 0 0;
  padding-left: 1px;
  border-top: 1px solid #949494;
  border-left: 1px solid #949494;
  font-size: 13px;
  line-height: 19px;
  color: #111;
`;

const Status = styled.footer`
  height: 21px;
  flex: none;
  display: flex;
  align-items: center;
  justify-content: flex-end;
  padding-right: 20px;
  background: ${BLUE};
  color: #fff;
`;

const StatusText = styled.span`
  width: 210px;
`;

const Find = styled.input`
  width: 140px;
  height: 18px;
  padding: 0 4px;
  border: 0;
  background: #fff;
  color: #222;
  &::placeholder { color: #a8a8a8; opacity: 1; }
`;

const Slider = styled.input`
  appearance: none;
  width: 110px;
  height: 16px;
  margin: 0 1px;
  background: linear-gradient(#fff, #fff) center / 100% 1px no-repeat;
  &::-webkit-slider-thumb {
    appearance: none;
    width: 9px;
    height: 13px;
    background: #dfe8f4;
    border: 1px solid #8ca4c8;
    border-radius: 0 0 5px 5px;
  }
`;

/* ---------- model drawing ---------- */

type Seg = [number, number, number, number];

/* Extension and plain lines. */
const lines: Seg[] = [
  [490, 348, 583, 391], [494, 616, 587, 660], [527, 498, 641, 550],
  [581, 326, 583, 391], [641, 268, 643, 381], [726, 254, 728, 366], [798, 243, 800, 354], [883, 229, 885, 340], [943, 223, 945, 330],
  [999, 248, 1000, 354], [1000, 354, 1025, 366], [1025, 366, 1128, 348], [966, 537, 1130, 509],
  [1052, 565, 1123, 552], [1053, 646, 1126, 633], [1053, 646, 1054, 707],
  [689, 627, 692, 807], [641, 550, 643, 748], [587, 660, 589, 759], [627, 531, 641, 550],
  [581, 334, 598, 331], [627, 326, 642, 323], [883, 290, 900, 287], [928, 282, 944, 279],
];

/* Dimension arms: start point, then the point that carries the arrow head. */
const arms: Seg[] = [
  [495, 472, 493, 350], [495, 496, 497, 617], [530, 554, 529, 499], [530, 578, 531, 633],
  [557, 338, 581, 334], [667, 318, 642, 323], [669, 270, 641, 274], [698, 266, 726, 261],
  [749, 304, 728, 308], [777, 300, 798, 296], [826, 245, 798, 249], [855, 240, 883, 235],
  [859, 294, 883, 290], [969, 275, 944, 279], [962, 237, 943, 228], [979, 246, 999, 254],
  [1124, 418, 1122, 350], [1124, 442, 1125, 510], [1119, 582, 1118, 553], [1120, 606, 1120, 634],
  [854, 735, 692, 763], [891, 729, 1053, 702], [661, 750, 643, 743], [675, 758, 692, 765],
  [632, 774, 589, 755], [648, 781, 692, 802],
];

const labels: { t: string; x: number; y: number; r: number; s?: number }[] = [
  { t: "100", x: 495, y: 484, r: 8, s: 14 }, { t: "50", x: 530, y: 567, r: 8, s: 14 },
  { t: "29,74°", x: 616, y: 598, r: 14, s: 13 },
  { t: "25", x: 612, y: 328, r: -7 }, { t: "35", x: 684, y: 267, r: -7 }, { t: "30", x: 763, y: 301, r: -7 },
  { t: "35", x: 841, y: 242, r: -7 }, { t: "25", x: 915, y: 284, r: -7 }, { t: "40", x: 971, y: 242, r: 14, s: 14 },
  { t: "60", x: 1124, y: 429, r: -5 }, { t: "30", x: 1120, y: 593, r: -5 }, { t: "150", x: 874, y: 732, r: -7 },
  { t: "35", x: 668, y: 754, r: 14, s: 14 }, { t: "75", x: 641, y: 778, r: 14, s: 14 },
];

const Arm = ({ seg: [x1, y1, x2, y2] }: { seg: Seg }) => (
  <g>
    <path d={`M${x1} ${y1}L${x2} ${y2}`} />
    <path d="M0 0l-13 -3v6z" fill={ORANGE} stroke="none" transform={`translate(${x2} ${y2}) rotate(${(Math.atan2(y2 - y1, x2 - x1) * 180) / Math.PI})`} />
  </g>
);

const Model = () => (
  <Scene viewBox="30 161 1541 693" preserveAspectRatio="xMidYMid meet" role="img" aria-label="Dimensioned block model">
    <defs>
      <linearGradient id="side" gradientUnits="userSpaceOnUse" x1="600" y1="390" x2="640" y2="670"><stop offset="0" stopColor="#8a8850" /><stop offset=".25" stopColor="#6a6a3c" /><stop offset=".55" stopColor="#42412a" /><stop offset=".7" stopColor="#38372a" /><stop offset="1" stopColor="#2c2b18" /></linearGradient>
      <linearGradient id="side2" x1="0" y1="0" x2=".3" y2="1"><stop offset="0" stopColor="#85834a" /><stop offset=".35" stopColor="#5f5d38" /><stop offset=".7" stopColor="#45432a" /><stop offset="1" stopColor="#333019" /></linearGradient>
      <linearGradient id="top" x1="0" y1="0" x2="1" y2="0"><stop offset="0" stopColor="#bbb868" /><stop offset=".5" stopColor="#c6c472" /><stop offset="1" stopColor="#b3b163" /></linearGradient>
      <linearGradient id="face" x1="0" y1="0" x2=".2" y2="1"><stop offset="0" stopColor="#7f7d4c" /><stop offset=".6" stopColor="#8a8855" /><stop offset="1" stopColor="#8d8b59" /></linearGradient>
      <linearGradient id="front" x1="0" y1="0.300" x2="1" y2="0"><stop offset="0" stopColor="#918f5c" /><stop offset=".35" stopColor="#989660" /><stop offset=".62" stopColor="#a5a266" /><stop offset=".85" stopColor="#999662" /><stop offset="1" stopColor="#8f8d5e" /></linearGradient>
      <linearGradient id="fillet" x1=".133" y1=".35" x2=".339" y2=".892"><stop offset="0" stopColor="#7a7745" /><stop offset=".2" stopColor="#5c5932" /><stop offset=".45" stopColor="#77744a" /><stop offset=".72" stopColor="#dedb8e" /><stop offset=".95" stopColor="#8f8c54" /></linearGradient>
    </defs>

    <g stroke="#4c4b38" strokeWidth=".8" strokeLinejoin="round">
      <path d="M701 533l29-6 77 36-82 14-24-36z" fill="url(#top)" />
      <path d="M858 505l29-4 79 36-84 14-24-38z" fill="url(#top)" />

      <path d="M583 405Q583 396 588 394L633 413Q638 418 638 429L641 550L690 627L691 706L587 660z" fill="url(#side)" />
      <path d="M588 394L650 384L692 402L634 413z" fill="url(#top)" />
      <path d="M634 413L692 402Q699 407 699 419L638 429Q639 418 634 413z" fill="url(#fillet)" />
      <path d="M638 429L699 419L701 541L641 550z" fill="url(#face)" />

      <path d="M728 380Q728 371 733 370L780 389Q784 393 784 403L785 527L807 563L730 527z" fill="url(#side2)" />
      <path d="M733 370L808 357L850 375L780 389z" fill="url(#top)" />
      <path d="M780 389L850 376Q856 382 856 392L784 403Q784 394 780 389z" fill="url(#fillet)" />
      <path d="M784 403L856 392L858 513L785 527z" fill="url(#face)" />

      <path d="M885 355Q885 345 890 343L936 363Q940 367 940 377L942 498L966 537L887 501z" fill="url(#side2)" />
      <path d="M890 343L952 332L994 351L936 363z" fill="url(#top)" />
      <path d="M936 363L994 351Q1001 357 1001 368L940 377Q941 368 936 363z" fill="url(#fillet)" />
      <path d="M940 377L1001 368L1003 488L942 498z" fill="url(#face)" />

      <path d="M641 550L701 541L725 577L807 563L785 527L858 513L882 551L966 537L942 498L1003 488L1053 565L690 627z" fill="#5c5635" />
      <path d="M690 627L1053 565L1053 646L691 706z" fill="url(#front)" />
    </g>

    <g stroke={ORANGE} fill="none">
      {lines.map((s, i) => <path key={i} d={`M${s[0]} ${s[1]}L${s[2]} ${s[3]}`} />)}
      {arms.map((s, i) => <Arm key={i} seg={s} />)}
      <path d="M628 535Q623 560 618 586M614 610Q612 640 613 672" />
      <path d="M628 535l-5 11 5 1zM613 672l-2-13h4z" fill={ORANGE} />
    </g>
    <g fill={ORANGE} stroke={ORANGE} strokeWidth=".3" textAnchor="middle" fontFamily='"Liberation Sans", sans-serif'>
      {labels.map((l, i) => {
        const size = l.s ?? 18;
        return <text key={i} x={l.x} y={l.y} dy={size > 14 ? 7 : 5} fontSize={size} transform={`rotate(${l.r} ${l.x} ${l.y})`}>{l.t}</text>;
      })}
    </g>

    <g strokeWidth="3" fontFamily="Liberation Sans" fontSize="14" textAnchor="middle">
      <path d="M793 503V474" stroke="#1414b8" /><path d="M793 460l4 16h-8z" fill="#1414b8" />
      <path d="M795 505l28-3" stroke="#18a828" /><path d="M835 500l-14-2 1 7z" fill="#18a828" />
      <path d="M795 507l13 6" stroke="#c81818" /><path d="M819 518l-15-3 4-6z" fill="#c81818" />
      <circle cx="793" cy="505" r="4.500" fill="#f4e418" />
      <g strokeWidth=".5">
        <text x="792" y="456" fill="#2828b0" stroke="#2828b0">Z</text><text x="843" y="504" fill="#28c828" stroke="#28c828">Y</text><text x="820" y="524" fill="#d82020" stroke="#d82020">X</text>
      </g>
    </g>

    <g transform="translate(306 409)">
      <path d="M1 1v20l5-4 4 9 3-1-4-9h5z" fill="#eef6fa" stroke="#777e86" strokeWidth="1.200" />
      <path d="M14 22l3-3 4 2-3 4z" fill="#d4ecfa" stroke="#4c90bc" strokeWidth="1.500" />
    </g>

    <g stroke="#9a9a9e" strokeLinejoin="round" fontFamily='"Liberation Sans", sans-serif'>
      <path d="M1473 764l41-5 28 7-46 7z" fill="#fff" />
      <path d="M1473 764l23 9 1 53-22-16z" fill="#fdfdfe" />
      <path d="M1496 773l46-7-1 49-44 11z" fill="#f3f3f5" />
      <g stroke="none" fill="#555" textAnchor="middle">
        <text x="1485" y="796" fontSize="6" transform="rotate(25 1485 794)">FRONT</text>
        <text x="1520" y="800" fontSize="10" transform="rotate(-7 1520 797)">RIGHT</text>
        <text x="1508" y="769" fontSize="8" transform="rotate(20 1508 766)">co</text>
      </g>
      <path d="M1507 789v-20" stroke="#9088e0" /><path d="M1507 790l18-3" stroke="#90d890" /><path d="M1507 790l12 6" stroke="#e0a0a0" />
      <circle cx="1507" cy="790" r="2" fill="#e8d060" stroke="#b09830" />
    </g>
  </Scene>
);

/* ---------- data ---------- */

const tabs: [string, number][] = [["Home", 58], ["Surfacing", 78], ["PMI", 48], ["Simulation", 84], ["Inspect", 66], ["Tools", 55], ["Add Ins", 68], ["View", 55], ["Data Management", 123]];

type TreeRow = { id: string; label: string; icon: string; w: number; expand?: boolean; checked?: boolean; dim?: boolean };
const topRows: TreeRow[] = [
  { id: "pmi", label: "PMI", icon: "pmi", w: 45, expand: true, checked: true },
  { id: "base", label: "Base", icon: "base", w: 50, checked: true },
  { id: "mat", label: "Material (None)", icon: "material", w: 105 },
  { id: "ref", label: "Base Reference Planes", icon: "refPlane", w: 140, expand: true, checked: false, dim: true },
  { id: "bod", label: "Design Bodies", icon: "bodies", w: 100, expand: true, checked: true },
];
const features: [string, string, number][] = [["Protrusion 1", "protrusion", 90], ["Cutout 1", "cutout", 71], ["Cutout 2", "cutout", 71], ["Round 1", "roundSm", 70]];

const Plus = ({ minus }: { minus?: boolean }) => (
  <svg width="5" height="5" viewBox="0 0 5 5" aria-hidden="true"><path d={minus ? "M0 2h5v1H0z" : "M0 2h2V0h1v2h2v1H3v2H2V3H0z"} fill="#222" /></svg>
);

export default function App() {
  return (
    <Frame>
      <GlobalStyle />
      <Defs />
      <Header>
        <AppButton aria-label="Application menu"><Glyph name="logo" size={28} box={28} /></AppButton>
        <QuickAccess>
          <IconButton aria-label="Save"><Glyph name="save" /></IconButton>
          <Rule />
          <IconButton aria-label="Undo"><Glyph name="undo" /></IconButton>
          <Caret $faint />
          <IconButton aria-label="Redo"><Glyph name="redo" /></IconButton>
          <Caret $faint />
          <IconButton $w={28} aria-label="Customise"><Glyph name="customise" /></IconButton>
        </QuickAccess>
        <Title>Solid Edge ST9 - Ordered Part - [Design Intent Explanation Block.par]</Title>
        <WindowButtons>
          <IconButton aria-label="Minimise"><Glyph name="min" /></IconButton>
          <IconButton aria-label="Maximise"><Glyph name="max" /></IconButton>
          <IconButton aria-label="Close"><Glyph name="close" /></IconButton>
        </WindowButtons>
        <TabRow>
          {tabs.map(([t, w]) => <Tab key={t} $w={w} $on={t === "Home"}>{t}</Tab>)}
          <DocButtons>
            <IconButton $w={18} aria-label="Help"><Glyph name="help" /></IconButton>
            <IconButton $w={18} aria-label="Cascade"><Glyph name="cascade" /></IconButton>
            <IconButton $w={18} aria-label="Arrange"><Glyph name="cascade2" /></IconButton>
            <IconButton $w={12} aria-label="Minimise document"><Glyph name="min" size={13} /></IconButton>
            <IconButton $w={12} aria-label="Restore document"><Glyph name="restore" /></IconButton>
            <IconButton $w={12} aria-label="Close document"><Glyph name="close" size={15} /></IconButton>
          </DocButtons>
        </TabRow>
      </Header>

      <Ribbon>
        <Group name="Clipboard" w={87} pad={11}>
          <Big icon="paste" label="Paste" w={36} off />
          <SmallCol $ml={6}><Small icon="scissors" off /><Small icon="pages" off /><Small icon="partClip" drop /></SmallCol>
        </Group>
        <Group name="Select" w={74} pad={7}>
          <Big icon="cursor" label="Select" w={41} on drop />
          <SmallCol $ml={2}><Small icon="filter" /><Small icon="selectBox" /></SmallCol>
        </Group>
        <Group name="Planes" w={39} pad={9}>
          <SmallCol><Small icon="planeA" /><Small icon="planeB" /><Small icon="axes" /></SmallCol>
        </Group>
        <Group name="Sketch" w={180} pad={6}>
          <Big icon="sketch" label="Sketch" />
          <Big icon="sketch3" label={"3D\nSketch"} />
          <SmallCol $ml={3}><Small icon="tear" label="Tear-Off" off /><Small icon="copyIc" label="Copy" off /><Small icon="component" label="Component" /></SmallCol>
        </Group>
        <Group name="Solids" w={389} pad={6}>
          <Big icon="extrude" label="Extrude" w={44} />
          <Big icon="cut" label="Cut" w={42} />
          <Big icon="revolve" label="Revolve" w={44} />
          <Big icon="revolvedCut" label={"Revolved\nCut"} w={50} />
          <Big icon="hole" label="Hole" w={44} drop />
          <Big icon="round" label="Round" drop />
          <Big icon="draft" label="Draft" />
          <Big icon="thin" label={"Thin\nWall"} drop />
          <SmallCol $ml={2}><Small icon="sweep" drop /><Small icon="rib" drop /><Small icon="addBody" drop /></SmallCol>
        </Group>
        <Group name="Pattern" w={95} pad={5}>
          <Big icon="pattern" label="Pattern" drop />
          <Big icon="mirror" label="Mirror" drop />
        </Group>
        <Group name="Modify" w={196} pad={5}>
          <Big icon="moveFaces" label={"Move\nFaces"} w={43} drop />
          <Big icon="deleteFaces" label={"Delete\nFaces"} w={43} drop />
          <SmallCol $ml={5}><Small icon="resizeH" label="Resize Holes" /><Small icon="resizeR" label="Resize Rounds" /></SmallCol>
        </Group>
        <Group name="Dimension" w={172} pad={6}>
          <Big icon="smart" label={"Smart\nDimension"} w={58} />
          <SmallCol $ml={4}><Small icon="d1" /><Small icon="d2" /><Small icon="d3" drop /></SmallCol>
          <SmallCol $ml={9}><Small icon="d4" /><Small icon="d5" /><Small icon="d6" /></SmallCol>
          <SmallCol $ml={5}><Small icon="d7" /></SmallCol>
          <InnerRule />
          <SmallCol><Small icon="aStyle" /><Small icon="aUp" /><Small icon="aDown" /></SmallCol>
        </Group>
        <Group name="Orient" w={158} pad={5}>
          <Big icon="zoomArea" label={"Zoom\nArea"} />
          <Big icon="fit" label="Fit" />
          <SmallCol $ml={3}><Small icon="zoom" /><Small icon="hand" /><Small icon="spin" /></SmallCol>
          <SmallCol $ml={5}><Small icon="rotate" /><Small icon="turn" /><Small icon="preview" /></SmallCol>
          <SmallCol $ml={5}><Small icon="views" /><Small icon="cube" /></SmallCol>
        </Group>
        <Group name="" w={44} pad={1}>
          <BigBox $w={42}>
            <IconButton $w={32} $h={32} as="span"><Glyph name="style" /></IconButton>
            <BigLabel>Style</BigLabel>
            <UnderCaret><Caret /></UnderCaret>
          </BigBox>
        </Group>
        <Group name="Window" w={75} pad={6}>
          <Big icon="windows" label={"Switch\nWindows"} w={64} off drop />
        </Group>
      </Ribbon>

      <Work>
        <Dock $left>
          {["heat", "family", "library", "gauge", "blocks", "gear"].map(n => (
            <DockItem key={n} aria-label={n}><Glyph name={n} size={20} box={20} /></DockItem>
          ))}
          <DockItem><Glyph name="film" size={20} box={20} /><VerticalText>Feature Playback</VerticalText></DockItem>
        </Dock>

        <Centre>
          <DocBar>
            <DocTab><Glyph name="docTab" />Design Intent Explanation Block...<Glyph name="close" size={14} /></DocTab>
            <DocNav>
              <IconButton $w={13} aria-label="Previous tab"><Glyph name="prev" /></IconButton>
              <IconButton $w={13} aria-label="Next tab"><Glyph name="next" /></IconButton>
              <IconButton $w={13} aria-label="Close tab"><Glyph name="close" size={13} /></IconButton>
            </DocNav>
          </DocBar>
          <Stage>
            <Model />
            <Panel>
              <Grip />
              <Tree>
                <Row><Chip $w={211} as="span"><Glyph name="part" size={14} />Design Intent Explanation Block.par</Chip></Row>
                {topRows.map(r => (
                  <Row key={r.id}>
                    <Slot $w={16}>{r.expand && <Expander aria-label={`Expand ${r.label}`}><Plus /></Expander>}</Slot>
                    <Slot $w={18}>{r.checked !== undefined && <Check type="checkbox" id={r.id} defaultChecked={r.checked} />}</Slot>
                    <Chip $w={r.w} $dim={r.dim} htmlFor={r.checked !== undefined ? r.id : undefined}><Glyph name={r.icon} size={14} />{r.label}</Chip>
                  </Row>
                ))}
                <Row>
                  <Slot $w={16}><Expander aria-label="Collapse Ordered"><Plus minus /></Expander></Slot>
                  <OrderedBar>
                    <OrderedName>
                      <svg width="7" height="12" viewBox="0 0 7 12" aria-hidden="true"><path d="M3 0h2v3h2L4 6 1 3h2zM3 6h2v2h2l-3 4-3-4h2z" fill="#fff" /></svg>
                      Ordered
                    </OrderedName>
                    <svg width="16" height="10" viewBox="0 0 16 10" aria-hidden="true"><path d="M16 0v10L0 5z" fill="#fff" /></svg>
                  </OrderedBar>
                </Row>
                {features.map(([label, icon, w]) => (
                  <Row key={label} $deep><Chip as="span" $w={w} $bold><Glyph name={icon} size={14} />{label}</Chip></Row>
                ))}
              </Tree>
            </Panel>
          </Stage>
          <PromptBar>
            <PromptName><Glyph name="promptIc" size={20} box={20} />PromptBar</PromptName>
            <Prompt>Select geometry or features to edit, or click on 'Solids' commands to create 3D features.</Prompt>
            {["fontUp", "fontDown", "collapse", "menu", "pin", "closeDark"].map(n => (
              <IconButton key={n} aria-label={n}><Glyph name={n} /></IconButton>
            ))}
          </PromptBar>
        </Centre>

        <Dock>
          <DockItem><Glyph name="question" size={20} box={20} /><VerticalText>Learn Solid Edge</VerticalText></DockItem>
          <DockItem aria-label="YouTube"><Glyph name="youtube" size={20} box={20} /></DockItem>
          <DockItem aria-label="Facebook"><Glyph name="facebook" size={20} box={20} /></DockItem>
        </Dock>
      </Work>

      <Status>
        <StatusText>0 items are selected</StatusText>
        <Find type="text" placeholder="Find a command" aria-label="Find a command" />
        <IconButton $w={24} aria-label="Run command"><Glyph name="go" size={15} /></IconButton>
        {["sArea", "zoom", "sFit", "sHand", "spin", "sLook", "sVisual", "sStyle", "minus"].map(n => (
          <IconButton key={n} $w={22} aria-label={n}><Glyph name={n} size={15} /></IconButton>
        ))}
        <Slider type="range" aria-label="Zoom" defaultValue={47} />
        {["plus", "record", "upload"].map(n => (
          <IconButton key={n} $w={22} aria-label={n}><Glyph name={n} size={15} /></IconButton>
        ))}
      </Status>
    </Frame>
  );
}
